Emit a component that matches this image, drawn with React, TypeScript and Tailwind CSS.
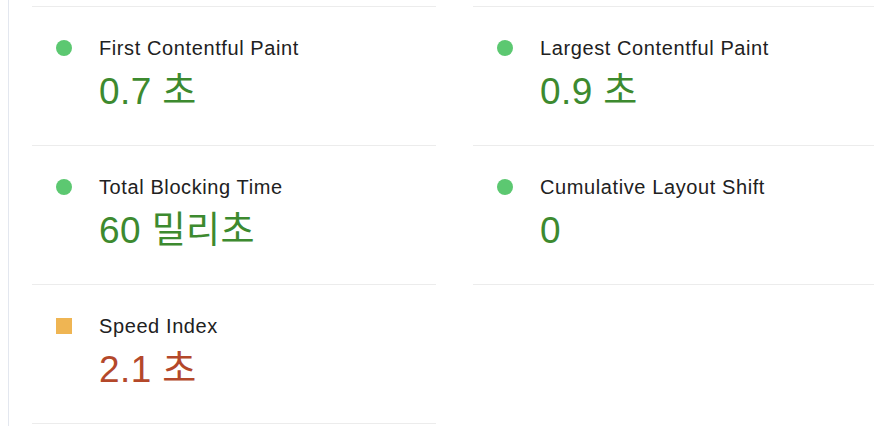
import React from 'react';

type Metric = {
  label: string;
  value: string;
  status: 'pass' | 'average';
};

const metrics: Metric[] = [
  { label: 'First Contentful Paint', value: '0.7 초', status: 'pass' },
  { label: 'Largest Contentful Paint', value: '0.9 초', status: 'pass' },
  { label: 'Total Blocking Time', value: '60 밀리초', status: 'pass' },
  { label: 'Cumulative Layout Shift', value: '0', status: 'pass' },
  { label: 'Speed Index', value: '2.1 초', status: 'average' },
];

const MetricCell: React.FC<{ metric: Metric }> = ({ metric }) => {
  const isPass = metric.status === 'pass';
  return (
    <div className="h-[139px] border-b border-[#ececec] pl-6 pt-[29px]">
      <div className="flex items-center h-6">
        {isPass ? (
          <span className="w-4 h-4 rounded-full bg-[#5cc871] shrink-0" />
        ) : (
          <span className="w-4 h-4 bg-[#efb553] shrink-0" />
        )}
        <span className="ml-[27px] text-[20px] leading-6 tracking-[0.6px] text-[#212121]">
          {metric.label}
        </span>
      </div>
      <div
        className={`ml-[43px] mt-[12px] text-[37px] leading-10 tracking-[0.4px] ${
          isPass ? 'text-[#3d8a2f]' : 'text-[#b4482a]'
        }`}
      >
        {metric.value}
      </div>
    </div>
  );
};

export default function App() {
  return (
    <div
      className="w-[874px] h-[426px] bg-white overflow-hidden flex"
      style={{ fontFamily: '"Liberation Sans", "Noto Sans CJK KR", sans-serif' }}
    >
      <div className="ml-2 w-px bg-[#e3e7ef] shrink-0" />
      <div className="ml-[23px] pt-[6px] grid grid-cols-[404px_404px] gap-x-[37px] content-start">
        {metrics.map((m, i) => (
          <div key={i} className={i < 2 ? 'border-t border-[#ececec]' : ''}>
            <MetricCell metric={m} />
          </div>
        ))}
      </div>
    </div>
  );
}
